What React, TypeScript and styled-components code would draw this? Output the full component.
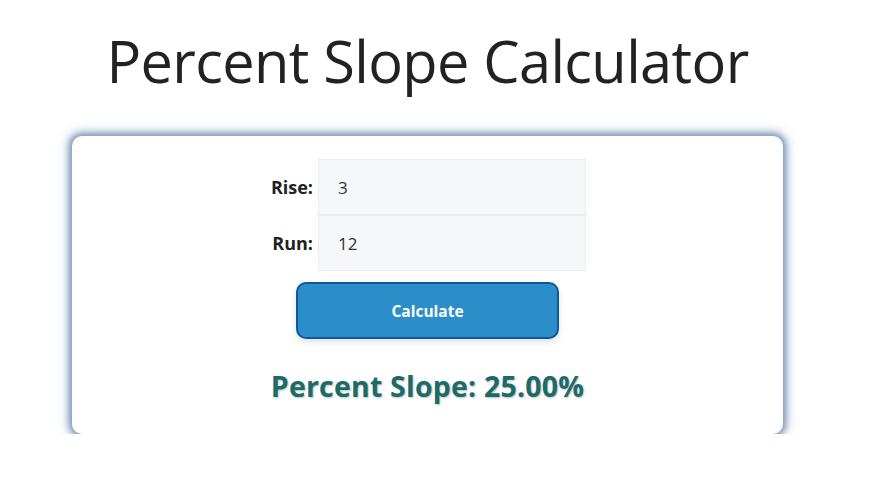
import React, { useState } from 'react'
import styled, { createGlobalStyle } from 'styled-components'

const GlobalStyle = createGlobalStyle`
  html, body {
    margin: 0;
    padding: 0;
    background: #ffffff;
    font-family: "Open Sans", "Noto Sans", sans-serif;
  }
`

const Page = styled.div`
  display: flex;
  flex-direction: column;
  align-items: center;
  width: 855px;
  padding-top: 22px;
`

const Title = styled.h1`
  margin: 0 0 36px;
  font-size: 57.7px;
  font-weight: 400;
  line-height: 78px;
  color: #222222;
  letter-spacing: -0.6px;
`

const Card = styled.div`
  width: 711px;
  box-sizing: border-box;
  background: #ffffff;
  border-radius: 10px;
  box-shadow: 0 0 6px 3px rgba(90, 125, 165, 0.75), 0 0 14px 4px rgba(120, 150, 190, 0.35);
  padding: 23px 0 29px;
  display: flex;
  flex-direction: column;
  align-items: center;
`

const Row = styled.div`
  display: flex;
  align-items: center;
`

const Label = styled.label`
  width: 49px;
  padding-right: 5px;
  box-sizing: border-box;
  text-align: right;
  white-space: nowrap;
  font-size: 18px;
  font-weight: 700;
  color: #222222;
`

const Input = styled.input`
  width: 268px;
  height: 56px;
  box-sizing: border-box;
  padding: 0 19px;
  border: 1px solid #ececee;
  background: #f6f7f9;
  font-family: inherit;
  font-size: 17px;
  color: #333333;
  outline: none;
`

const Button = styled.button`
  margin-top: 11px;
  width: 263px;
  height: 57px;
  border: 2px solid #0d58a0;
  border-radius: 10px;
  background: #2b8ec8;
  color: #ffffff;
  font-family: inherit;
  font-size: 15.5px;
  font-weight: 700;
  box-shadow: 0 3px 6px rgba(0, 0, 0, 0.12);
  cursor: pointer;
`

const Result = styled.div`
  margin-top: 28px;
  font-size: 28.5px;
  font-weight: 700;
  letter-spacing: 0.2px;
  color: #1b6b68;
  text-shadow: 1px 1px 2px rgba(0, 0, 0, 0.25);
`

const App = () => {
  const [rise, setRise] = useState('3')
  const [run, setRun] = useState('12')
  const [result, setResult] = useState('25.00')

  const handleCalculate = () => {
    const r = parseFloat(rise)
    const n = parseFloat(run)
    if (!isNaN(r) && !isNaN(n) && n !== 0) {
      setResult(((r / n) * 100).toFixed(2))
    }
  }

  return (
    <Page>
      <GlobalStyle />
      <Title>Percent Slope Calculator</Title>
      <Card>
        <Row>
          <Label>Rise:</Label>
          <Input value={rise} onChange={(e) => setRise(e.target.value)} />
        </Row>
        <Row>
          <Label>Run:</Label>
          <Input value={run} onChange={(e) => setRun(e.target.value)} />
        </Row>
        <Button onClick={handleCalculate}>Calculate</Button>
        <Result>Percent Slope: {result}%</Result>
      </Card>
    </Page>
  )
}

export default App
